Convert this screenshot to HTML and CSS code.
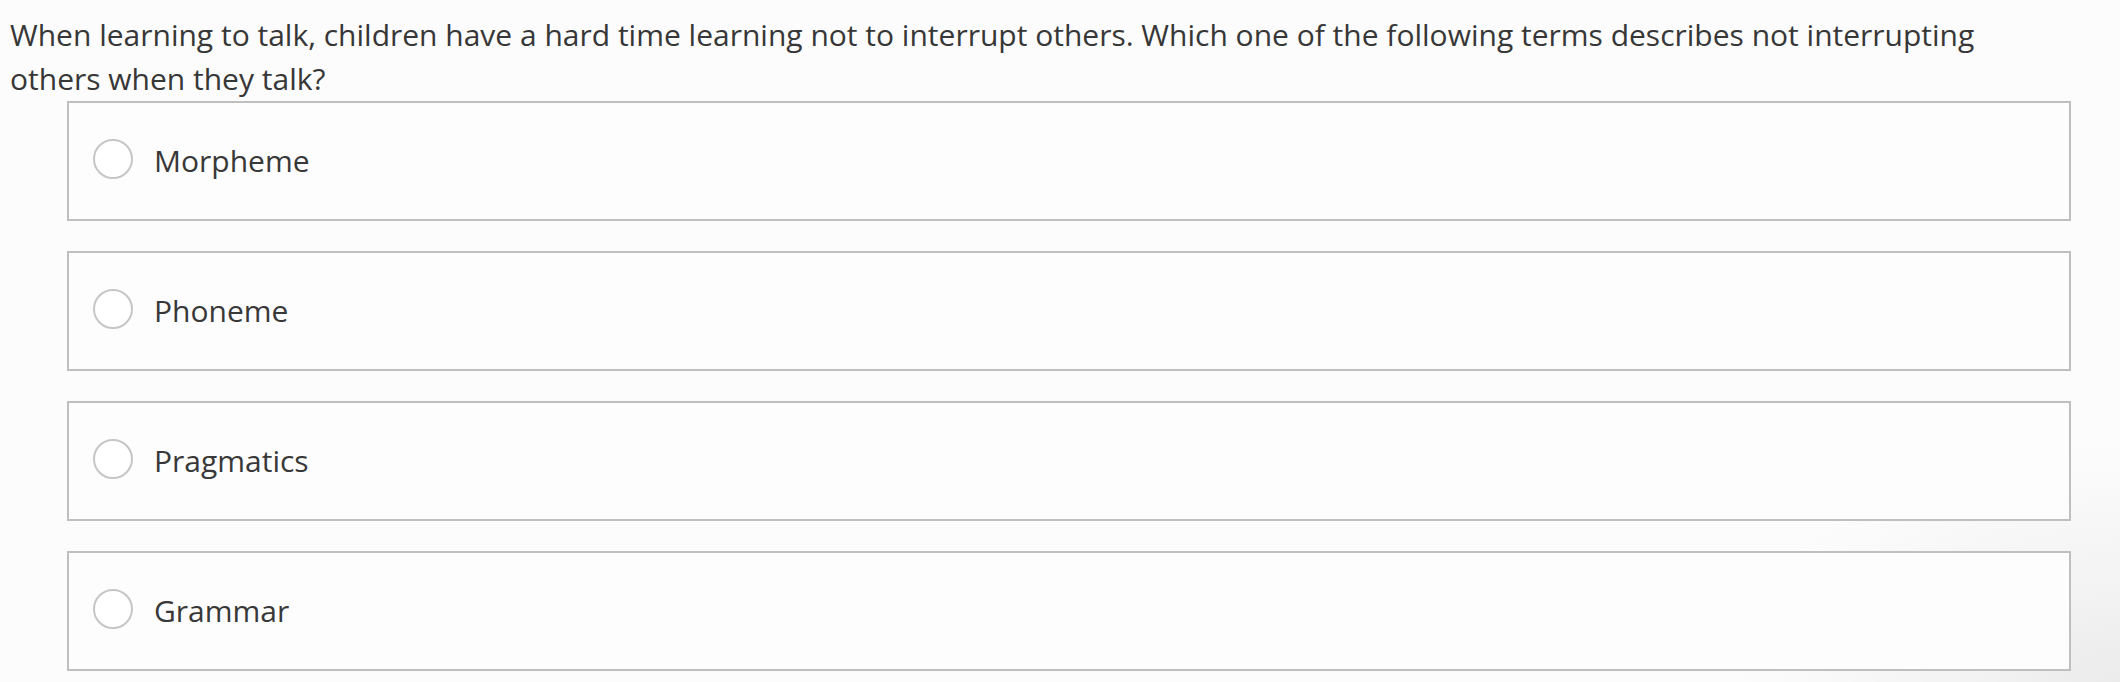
FILE: index.html
```html
<!DOCTYPE html>
<html lang="en">
<head>
<meta charset="utf-8">
<title>Question</title>
<link rel="stylesheet" href="styles.css">
</head>
<body>
<div class="page">
  <p class="question">When learning to talk, children have a hard time learning not to interrupt others. Which one of the following terms describes not interrupting others when they talk?</p>
  <div class="options">
    <label class="option"><span class="radio"></span><span class="label">Morpheme</span></label>
    <label class="option"><span class="radio"></span><span class="label">Phoneme</span></label>
    <label class="option"><span class="radio"></span><span class="label">Pragmatics</span></label>
    <label class="option"><span class="radio"></span><span class="label">Grammar</span></label>
  </div>
</div>
</body>
</html>
```

FILE: styles.css
```css
html, body {
  margin: 0;
  padding: 0;
  height: 100%;
}
body {
  background: #fcfcfc;
  font-family: "Open Sans", "Liberation Sans", sans-serif;
  color: #373737;
  overflow: hidden;
}
.page {
  height: 682px;
  box-sizing: border-box;
  background: radial-gradient(ellipse 380px 240px at 2120px 682px, #ebebeb 0%, #f2f2f2 35%, rgba(252,252,252,0) 100%);
}
.question {
  margin: 0;
  padding: 13px 120px 0 10px;
  font-size: 30px;
  line-height: 44px;
}
.options {
  display: flex;
  flex-direction: column;
  gap: 30px;
  margin: 0 49px 0 67px;
}
.option {
  display: flex;
  align-items: center;
  height: 120px;
  box-sizing: border-box;
  border: 2px solid #bfbfbf;
  background: #fdfdfd;
  padding-left: 24px;
}
.radio {
  width: 40px;
  height: 40px;
  box-sizing: border-box;
  border: 2px solid #c6c6c6;
  border-radius: 50%;
  background: #fff;
  margin-bottom: 5px;
  flex: none;
}
.label {
  margin-left: 21px;
  font-size: 30px;
  line-height: 40px;
  color: #383838;
}
```
